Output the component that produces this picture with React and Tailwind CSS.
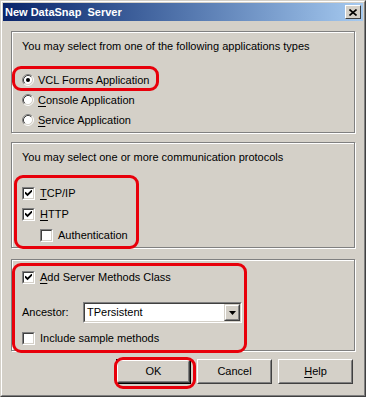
import React from 'react';

const Radio = ({ checked }) => (
  <svg width="12" height="12" viewBox="0 0 12 12" className="shrink-0">
    <circle cx="6" cy="6" r="4.5" fill="#fff" />
    <path d="M2.11 9.89 A5.5 5.5 0 0 1 9.89 2.11" stroke="#808080" fill="none" />
    <path d="M9.89 2.11 A5.5 5.5 0 0 1 2.11 9.89" stroke="#fff" fill="none" />
    <path d="M2.82 9.18 A4.5 4.5 0 0 1 9.18 2.82" stroke="#404040" fill="none" />
    <path d="M9.18 2.82 A4.5 4.5 0 0 1 2.82 9.18" stroke="#d4d0c8" fill="none" />
    {checked && <circle cx="6" cy="6" r="2" fill="#000" />}
  </svg>
);

const Check = ({ checked }) => (
  <div className="w-[13px] h-[13px] shrink-0 border border-t-[#808080] border-l-[#808080] border-b-white border-r-white">
    <div className="w-full h-full bg-white border border-t-[#404040] border-l-[#404040] border-b-[#d4d0c8] border-r-[#d4d0c8] flex items-center justify-center">
      {checked && (
        <svg width="7" height="7" viewBox="0 0 7 7">
          <path d="M0.5 3 L2.5 5 L6.5 1" stroke="#000" strokeWidth="1.8" fill="none" strokeLinecap="square" />
        </svg>
      )}
    </div>
  </div>
);

const Group = ({ className, children }) => (
  <div className={`border border-[#808080] shadow-[inset_1px_1px_0_#fff,1px_1px_0_#fff] ${className}`}>
    {children}
  </div>
);

const Button = ({ children, isDefault }) => (
  <div className={`w-[75px] h-[25px] ${isDefault ? 'border border-black' : ''}`}>
    <div className="w-full h-full border border-t-white border-l-white border-b-[#404040] border-r-[#404040]">
      <div className="w-full h-full flex items-center justify-center border border-t-[#d4d0c8] border-l-[#d4d0c8] border-b-[#808080] border-r-[#808080]">
        {children}
      </div>
    </div>
  </div>
);

const U = ({ children }) => <span className="underline underline-offset-2">{children}</span>;

const Red = ({ className }) => (
  <div className={`absolute border-[3px] border-[#e8000b] rounded-[9px] pointer-events-none ${className}`} />
);

export default function App() {
  return (
    <div className="relative w-[366px] h-[397px] bg-[#d4d0c8] text-[11px] text-black font-['Liberation_Sans',Arial,sans-serif] border border-t-[#d4d0c8] border-l-[#d4d0c8] border-b-[#404040] border-r-[#404040]">
      <div className="w-full h-full border border-t-white border-l-white border-b-[#808080] border-r-[#808080] p-px flex flex-col">
        {/* Title bar */}
        <div className="h-[18px] flex items-center justify-between bg-gradient-to-r from-[#0a246a] to-[#a6caf0] pl-[2px] pr-[2px]">
          <span className="text-white font-bold text-[11px] whitespace-pre">New DataSnap  Server</span>
          <div className="w-[16px] h-[14px] bg-[#d4d0c8] border border-t-white border-l-white border-b-[#404040] border-r-[#404040] flex items-center justify-center">
            <svg width="8" height="7" viewBox="0 0 8 7">
              <path d="M0.5 0.5 L7.5 6.5 M7.5 0.5 L0.5 6.5" stroke="#000" strokeWidth="1.6" />
            </svg>
          </div>
        </div>

        <div className="px-[8px] pt-[10px] flex flex-col">
          {/* Group 1 */}
          <Group className="h-[102px] pl-[10px] pt-[8px] flex flex-col">
            <div className="h-[13px] leading-[13px]">You may select from one of the following applications types</div>
            <div className="mt-[17px] flex flex-col">
              <div className="h-[20px] flex items-center gap-[4px]"><Radio checked /><span>VCL Forms Application</span></div>
              <div className="h-[20px] flex items-center gap-[4px]"><Radio /><span><U>C</U>onsole Application</span></div>
              <div className="h-[20px] flex items-center gap-[4px]"><Radio /><span><U>S</U>ervice Application</span></div>
            </div>
          </Group>

          {/* Group 2 */}
          <Group className="mt-[9px] h-[106px] pl-[10px] pt-[8px] flex flex-col">
            <div className="h-[13px] leading-[13px]">You may select one or more communication protocols</div>
            <div className="mt-[19px] flex flex-col">
              <div className="h-[21px] flex items-center gap-[5px]"><Check checked /><span><U>T</U>CP/IP</span></div>
              <div className="h-[21px] flex items-center gap-[5px]"><Check checked /><span><U>H</U>TTP</span></div>
              <div className="h-[21px] flex items-center gap-[5px] pl-[18px]"><Check /><span>Authentication</span></div>
            </div>
          </Group>

          {/* Group 3 */}
          <Group className="mt-[11px] h-[92px] pl-[10px] pt-[7px] flex flex-col">
            <div className="h-[20px] flex items-center gap-[5px]"><Check checked /><span><U>A</U>dd Server Methods Class</span></div>
            <div className="mt-[15px] h-[21px] flex items-center">
              <span className="w-[61px]">Ancestor:</span>
              <div className="w-[159px] h-[21px] border border-t-[#808080] border-l-[#808080] border-b-white border-r-white">
                <div className="w-full h-full bg-white border border-t-[#404040] border-l-[#404040] border-b-[#d4d0c8] border-r-[#d4d0c8] flex items-center justify-between">
                  <span className="pl-[2px]">TPersistent</span>
                  <div className="w-[16px] h-[17px] bg-[#d4d0c8] border border-t-[#d4d0c8] border-l-[#d4d0c8] border-b-[#404040] border-r-[#404040]">
                    <div className="w-full h-full border border-t-white border-l-white border-b-[#808080] border-r-[#808080] flex items-center justify-center">
                      <svg width="7" height="4" viewBox="0 0 7 4">
                        <path d="M0 0 H7 L3.5 4 Z" fill="#000" />
                      </svg>
                    </div>
                  </div>
                </div>
              </div>
            </div>
            <div className="mt-[5px] h-[20px] flex items-center gap-[5px]"><Check /><span>Include sample methods</span></div>
          </Group>

          {/* Buttons */}
          <div className="mt-[8px] flex justify-end gap-[6px] pr-[2px]">
            <Button isDefault>OK</Button>
            <Button>Cancel</Button>
            <Button><U>H</U>elp</Button>
          </div>
        </div>
      </div>

      <Red className="left-[11px] top-[65px] w-[147px] h-[25px]" />
      <Red className="left-[13px] top-[174px] w-[125px] h-[74px]" />
      <Red className="left-[11px] top-[262px] w-[235px] h-[90px]" />
      <Red className="left-[113px] top-[356px] w-[82px] h-[32px]" />
    </div>
  );
}
